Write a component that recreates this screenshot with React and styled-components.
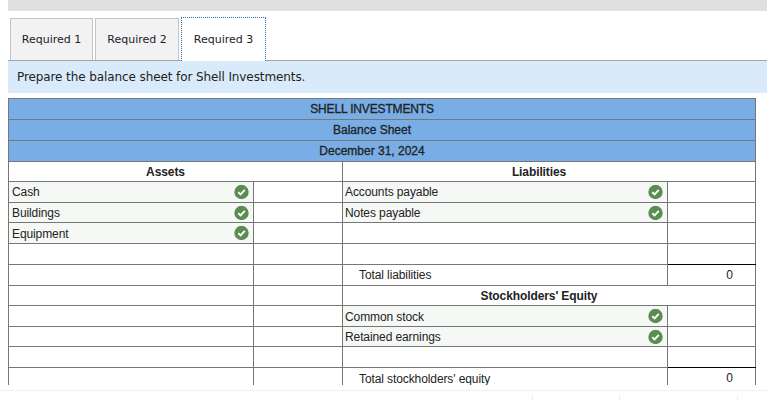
import styled, { createGlobalStyle } from 'styled-components';

const GlobalStyle = createGlobalStyle`
    html, body {
        margin: 0;
        padding: 0;
        background: #fff;
    }
    body {
        width: 767px;
        height: 400px;
        overflow: hidden;
        font-family: "Liberation Sans", Arial, sans-serif;
    }
`;

const Page = styled.div`
    height: 400px;
    padding-left: 8px;
    box-sizing: border-box;
    display: flex;
    flex-direction: column;
`;
const TopBar = styled.div`
    height: 11px;
    background: #e0e0e0;
`;
const Tabs = styled.div`
    display: flex;
    gap: 2px;
    height: 43px;
    margin-top: 6px;
    padding-left: 2px;
    border-bottom: 1px solid #a6a6a6;
`;
const Tab = styled.div`
    width: ${(p) => p.$w}px;
    box-sizing: border-box;
    margin-top: 1px;
    display: flex;
    align-items: center;
    justify-content: center;
    font-family: "DejaVu Sans", Verdana, sans-serif;
    font-size: 11px;
    color: #222;
    background: #f2f2f2;
    border: 1px solid #c4c4c4;
    border-bottom: none;
`;
const ActiveTab = styled(Tab)`
    margin-top: 0;
    margin-bottom: -1px;
    background: #fff;
    border: 1px dotted #2f6fb5;
    border-bottom: none;
`;
const Prompt = styled.div`
    height: 32px;
    display: flex;
    align-items: center;
    padding-left: 9px;
    background: #d9ebfa;
    font-family: "DejaVu Sans", Verdana, sans-serif;
    font-size: 12px;
    letter-spacing: -0.1px;
    color: #222;
`;
const SheetClip = styled.div`
    width: 748px;
    height: 287px;
    margin-top: 5px;
    overflow: hidden;
`;
const Sheet = styled.table`
    width: 747px;
    table-layout: fixed;
    border-collapse: collapse;
    font-size: 12px;
    color: #222;
`;
const Row = styled.tr`
    height: ${(p) => p.$h}px;
`;
const Title = styled.td`
    padding: 0 20px 0 0;
    border: 1px solid #777;
    background: #78ade6;
    text-align: center;
    letter-spacing: ${(p) => p.$tight || 0}px;
    -webkit-text-stroke: 0.3px #222;
`;
const Heading = styled.td`
    padding: 0 20px 0 0;
    border: 1px solid #777;
    text-align: center;
    font-weight: bold;
    letter-spacing: -0.1px;
`;
const Label = styled.td`
    position: relative;
    padding: ${(p) => (p.$low ? 2 : 0)}px 0 0 ${(p) => p.$pad}px;
    border: 1px solid #777;
    background: ${(p) => (p.$filled ? '#f5f8f5' : '#fff')};
    letter-spacing: -0.1px;
    white-space: nowrap;
`;
const Amount = styled.td`
    padding: 0 0 0 36px;
    border: 1px solid #777;
    border-bottom-color: ${(p) => (p.$rule ? '#000' : '#777')};
    text-align: center;
`;
const Tick = styled.svg`
    position: absolute;
    right: 4px;
    top: 50%;
    width: 15px;
    height: 15px;
    transform: translateY(-50%);
`;
const Footer = styled.div`
    margin: 5px 0 0 -8px;
    height: 9px;
    border-top: 1px solid #f0f0f0;
    position: relative;
`;
const FootTick = styled.span`
    position: absolute;
    top: 4px;
    bottom: 0;
    left: ${(p) => p.$x}px;
    width: 1px;
    background: #eee;
`;

const Check = () => (
    <Tick viewBox="0 0 15 15">
        <circle cx="7.5" cy="7.5" r="7.2" fill="#5b8c51" />
        <path d="M4.3 7.8 L6.6 10 L10.8 5.4" fill="none" stroke="#fff" strokeWidth="1.9" />
    </Tick>
);

const rows = [
    { h: 21, left: 'Cash', right: 'Accounts payable' },
    { h: 20, left: 'Buildings', right: 'Notes payable' },
    { h: 21, left: 'Equipment', low: true },
    { h: 21 },
    { h: 21, right: 'Total liabilities', total: true },
    { h: 20, section: "Stockholders' Equity" },
    { h: 21, right: 'Common stock', low: true },
    { h: 20, right: 'Retained earnings' },
    { h: 21 },
    { h: 21, right: "Total stockholders' equity", total: true, low: true },
];

const App = () => {
    return (
        <>
            <GlobalStyle />
            <Page>
                <TopBar />
                <Tabs>
                    <Tab $w={83}>Required 1</Tab>
                    <Tab $w={84}>Required 2</Tab>
                    <ActiveTab $w={85}>Required 3</ActiveTab>
                </Tabs>
                <Prompt>Prepare the balance sheet for Shell Investments.</Prompt>
                <SheetClip>
                    <Sheet>
                        <colgroup>
                            <col width="245" />
                            <col width="89" />
                            <col width="325" />
                            <col width="88" />
                        </colgroup>
                        <tbody>
                            <Row $h={21}><Title colSpan={4} $tight={-0.15}>SHELL INVESTMENTS</Title></Row>
                            <Row $h={21}><Title colSpan={4}>Balance Sheet</Title></Row>
                            <Row $h={21}><Title colSpan={4}>December 31, 2024</Title></Row>
                            <Row $h={20}>
                                <Heading colSpan={2}>Assets</Heading>
                                <Heading colSpan={2}>Liabilities</Heading>
                            </Row>
                            {rows.map((row, i) => (
                                <Row key={i} $h={row.h}>
                                    <Label $pad={3} $filled={!!row.left} $low={row.low}>
                                        {row.left}
                                        {row.left && <Check />}
                                    </Label>
                                    <Amount />
                                    {row.section ? (
                                        <Heading colSpan={2}>{row.section}</Heading>
                                    ) : (
                                        <>
                                            <Label
                                                $pad={row.total ? 16 : 2}
                                                $filled={row.right && !row.total}
                                                $low={row.low}
                                            >
                                                {row.right}
                                                {row.right && !row.total && <Check />}
                                            </Label>
                                            <Amount $rule={rows[i + 1]?.total}>{row.total ? '0' : ''}</Amount>
                                        </>
                                    )}
                                </Row>
                            ))}
                        </tbody>
                    </Sheet>
                </SheetClip>
                <Footer>
                    <FootTick $x={532} />
                    <FootTick $x={619} />
                    <FootTick $x={737} />
                </Footer>
            </Page>
        </>
    );
};

export default App;
